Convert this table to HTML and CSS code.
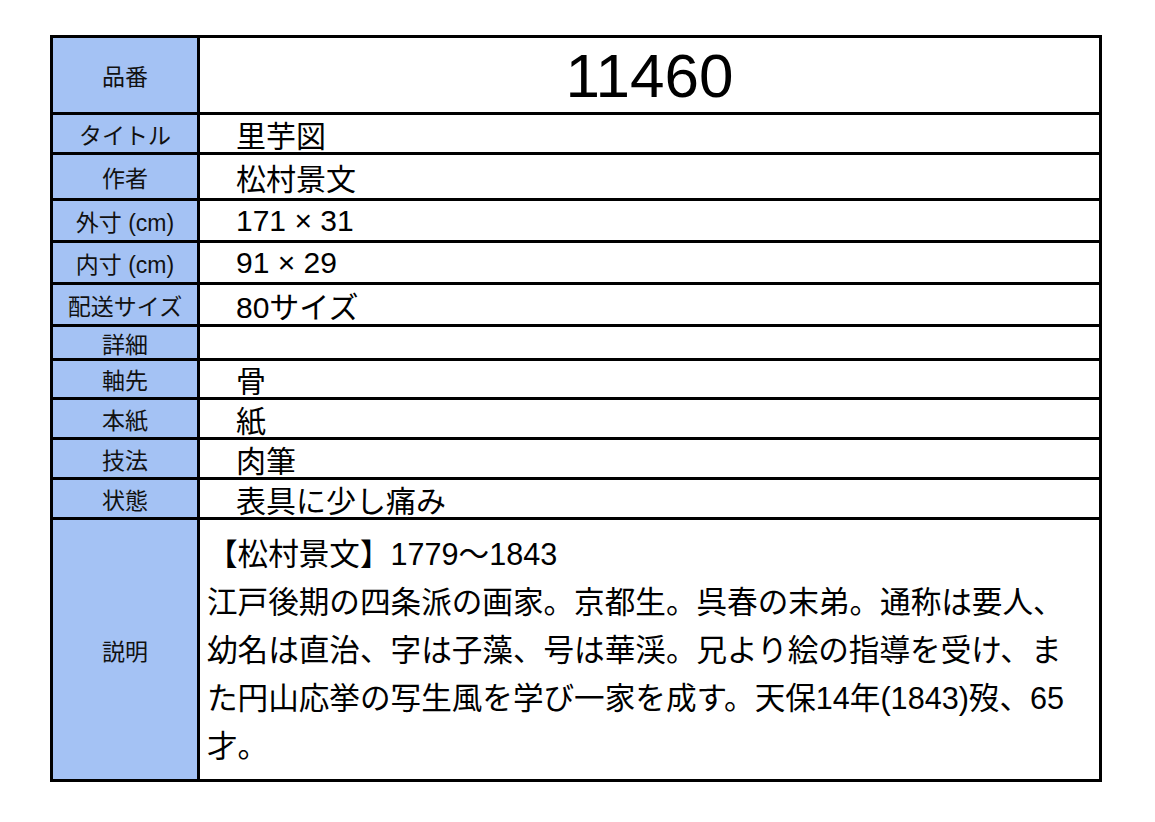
FILE: index.html
```html
<!DOCTYPE html>
<html lang="ja">
<head>
<meta charset="utf-8">
<title>11460 里芋図</title>
<link rel="stylesheet" href="styles.css">
</head>
<body>
<div class="sheet">
  <div class="label">品番</div><div class="value number">11460</div>
  <div class="label">タイトル</div><div class="value">里芋図</div>
  <div class="label">作者</div><div class="value">松村景文</div>
  <div class="label">外寸 (cm)</div><div class="value">171 × 31</div>
  <div class="label">内寸 (cm)</div><div class="value">91 × 29</div>
  <div class="label">配送サイズ</div><div class="value">80サイズ</div>
  <div class="label">詳細</div><div class="value"></div>
  <div class="label">軸先</div><div class="value">骨</div>
  <div class="label">本紙</div><div class="value">紙</div>
  <div class="label">技法</div><div class="value">肉筆</div>
  <div class="label">状態</div><div class="value">表具に少し痛み</div>
  <div class="label">説明</div>
  <div class="value desc"><p>【松村景文】1779～1843<br>江戸後期の四条派の画家。京都生。呉春の末弟。通称は要人、<br>幼名は直治、字は子藻、号は華渓。兄より絵の指導を受け、ま<br>た円山応挙の写生風を学び一家を成す。天保14年(1843)歿、65<br>才。</p></div>
</div>
</body>
</html>
```
FILE: styles.css
```css
html, body {
  margin: 0;
  padding: 0;
  background: #ffffff;
}
body {
  padding: 35px 0 0 50px;
  font-family: "Liberation Sans", "Noto Sans CJK JP", sans-serif;
  color: #000;
}
.sheet {
  display: grid;
  grid-template-columns: 144px 899px;
  grid-template-rows: 74px 37px 43px 39px 39px 39px 31px 36px 37px 37px 37px 259px;
  gap: 3px;
  padding: 3px;
  background: #000;
  width: max-content;
}
.label {
  background: #a4c2f4;
  display: flex;
  align-items: center;
  justify-content: center;
  font-size: 23px;
  color: #111;
  white-space: nowrap;
}
.value {
  background: #fff;
  display: flex;
  align-items: center;
  padding-left: 36px;
  font-size: 30px;
  white-space: nowrap;
}
.number {
  justify-content: center;
  padding-left: 0;
  font-size: 62px;
}
.desc {
  padding-left: 7px;
  font-size: 30.6px;
  white-space: normal;
}
.desc p {
  margin: 0;
  line-height: 48px;
  white-space: nowrap;
}
```
